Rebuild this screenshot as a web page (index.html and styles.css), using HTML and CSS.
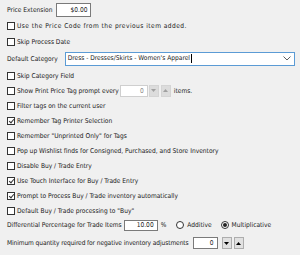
FILE: index.html
```html
<!DOCTYPE html>
<html lang="en">
<head>
  <meta charset="UTF-8">
  <title>Inventory Options</title>
  <link rel="stylesheet" href="styles.css">
</head>
<body>
  <div class="panel">
    <!-- price extension -->
    <div class="row row-price">
      <span class="label">Price Extension</span>
      <span class="textbox price-box">$0.00</span>
    </div>

    <div class="row check-row wide-text"><span class="check"></span>Use the Price Code from the previous item added.</div>
    <div class="row check-row"><span class="check"></span>Skip Process Date</div>

    <div class="row row-category">
      <span class="label">Default Category</span>
      <span class="combo">
        <span class="combo-text">Dress - Dresses/Skirts - Women's Apparel<span class="caret"></span></span>
        <svg class="combo-arrow" width="8" height="5" viewBox="0 0 8 5"><path d="M0.5 0.5 L4 4 L7.5 0.5" fill="none" stroke="#606060" stroke-width="1"/></svg>
      </span>
    </div>

    <div class="row check-row"><span class="check"></span>Skip Category Field</div>
    <div class="row check-row">
      <span class="check"></span>Show Print Price Tag prompt every
      <span class="textbox num-box disabled">0</span>
      <span class="spin disabled"><svg width="5" height="3" viewBox="0 0 5 3"><path d="M0 0 H5 L2.5 3 Z" fill="#a0a0a0"/></svg></span>
      <span class="spin disabled"><svg width="5" height="3" viewBox="0 0 5 3"><path d="M0 3 H5 L2.5 0 Z" fill="#a0a0a0"/></svg></span>
      <span class="after">items.</span>
    </div>
    <div class="row check-row"><span class="check"></span>Filter tags on the current user</div>
    <div class="row check-row"><span class="check checked"></span>Remember Tag Printer Selection</div>
    <div class="row check-row"><span class="check"></span>Remember "Unprinted Only" for Tags</div>
    <div class="row check-row"><span class="check"></span>Pop up Wishlist finds for Consigned, Purchased, and Store Inventory</div>
    <div class="row check-row"><span class="check"></span>Disable Buy / Trade Entry</div>
    <div class="row check-row"><span class="check checked"></span>Use Touch Interface for Buy / Trade Entry</div>
    <div class="row check-row"><span class="check checked"></span>Prompt to Process Buy / Trade inventory automatically</div>
    <div class="row check-row"><span class="check"></span>Default Buy / Trade processing to "Buy"</div>

    <div class="row row-diff">
      <span class="label">Differential Percentage for Trade Items</span>
      <span class="textbox pct-box">10.00</span>
      <span class="pct">%</span>
      <span class="radio"></span><span class="radio-label">Additive</span>
      <span class="radio selected"></span><span class="radio-label">Multiplicative</span>
    </div>

    <div class="row row-min">
      <span class="label tight">Minimum quantity required for negative inventory adjustments</span>
      <span class="textbox qty-box">0</span>
      <span class="spin"><svg width="5" height="3" viewBox="0 0 5 3"><path d="M0 0 H5 L2.5 3 Z" fill="#000"/></svg></span>
      <span class="spin"><svg width="5" height="3" viewBox="0 0 5 3"><path d="M0 3 H5 L2.5 0 Z" fill="#000"/></svg></span>
    </div>
  </div>
</body>
</html>
```

FILE: styles.css
```css
body {
  margin: 0;
  background: #f0f0f0;
  font-family: "DejaVu Sans Condensed", "DejaVu Sans", sans-serif;
  font-size: 6.6px;
  color: #1a1a1a;
}
.panel {
  padding: 3px 0 0 7px;
  display: flex;
  flex-direction: column;
}
.row {
  display: flex;
  align-items: center;
  white-space: nowrap;
}
.check-row {
  height: 15px;
}
.wide-text {
  letter-spacing: 0.45px;
}
.tight {
  letter-spacing: -0.1px;
}
.row-price {
  height: 14px;
  margin-bottom: 1px;
}
.row-price + .check-row {
  height: 16px;
}
.row-price + .check-row + .check-row {
  height: 16px;
}
.row-category {
  height: 15px;
  margin: 1px 0 2px;
}
.row-diff {
  height: 14px;
}
.row-min {
  height: 14px;
  margin-top: 4px;
}

/* checkbox */
.check {
  width: 8px;
  height: 8px;
  border: 1px solid #333;
  background: #fff;
  box-sizing: border-box;
  margin-right: 2px;
  position: relative;
  flex: none;
}
.check.checked::after {
  content: "";
  position: absolute;
  left: 2px;
  top: 0px;
  width: 2px;
  height: 4px;
  border: solid #333;
  border-width: 0 1px 1px 0;
  transform: rotate(40deg);
}

/* text boxes */
.textbox {
  background: #fff;
  border: 1px solid #7a7a7a;
  box-sizing: border-box;
  display: flex;
  align-items: center;
  justify-content: flex-end;
  padding-right: 3px;
}
.price-box {
  width: 35px;
  height: 14px;
  margin-left: 4px;
}
.num-box {
  width: 28px;
  height: 12px;
  margin-left: 1px;
}
.textbox.disabled {
  border-color: #cfcfcf;
  color: #888;
}
.pct-box {
  width: 34px;
  height: 11px;
  margin-left: 2px;
}
.qty-box {
  width: 25px;
  height: 12px;
  margin-left: 4px;
}
.spin {
  width: 10px;
  height: 12px;
  margin-left: 2px;
  background: #e1e1e1;
  border: 1px solid #adadad;
  box-sizing: border-box;
  display: flex;
  align-items: center;
  justify-content: center;
}
.qty-box + .spin {
  margin-left: 4px;
}
.spin.disabled {
  background: #dcdcdc;
  border-color: #d4d4d4;
}
.num-box + .spin {
  margin-left: 1px;
}
.after {
  margin-left: 3px;
}

/* combo box */
.combo {
  margin-left: 7px;
  width: 230px;
  height: 14px;
  border: 1px solid #5b9bd5;
  background: #fff;
  box-sizing: border-box;
  display: flex;
  align-items: center;
  justify-content: space-between;
  padding: 0 3px 0 2px;
}
.caret {
  display: inline-block;
  width: 1px;
  height: 9px;
  background: #000;
  vertical-align: middle;
  margin-left: 1px;
}

/* radios */
.pct {
  margin-left: 3px;
}
.radio {
  width: 8px;
  height: 8px;
  border: 1px solid #333;
  border-radius: 50%;
  background: #fff;
  box-sizing: border-box;
  margin: 0 3px 0 10px;
  position: relative;
}
.radio.selected::after {
  content: "";
  position: absolute;
  left: 1px;
  top: 1px;
  width: 4px;
  height: 4px;
  border-radius: 50%;
  background: #222;
}
.radio-label + .radio {
  margin-left: 9px;
}
```
